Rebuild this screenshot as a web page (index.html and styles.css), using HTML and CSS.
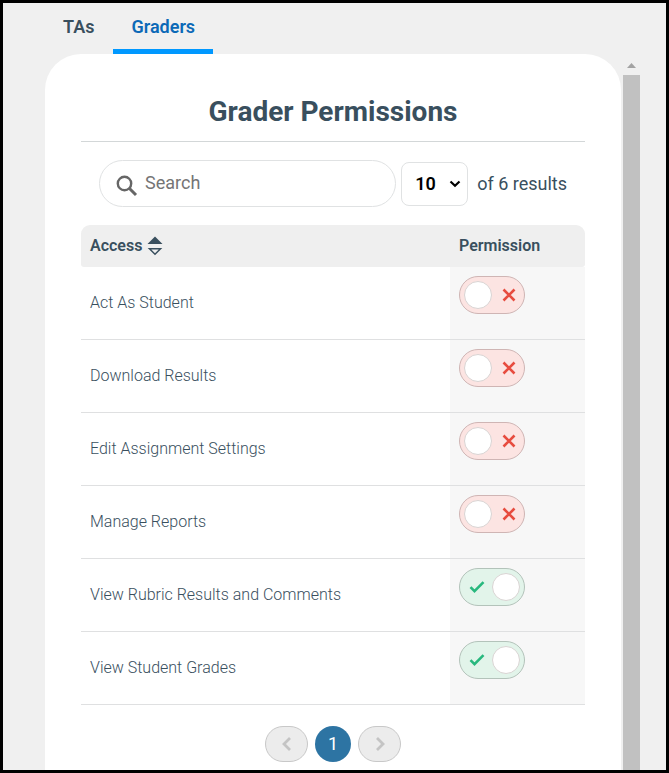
FILE: index.html
```html
<!DOCTYPE html>
<html lang="en">
<head>
<meta charset="utf-8">
<meta name="viewport" content="width=device-width, initial-scale=1">
<title>Grader Permissions</title>
<link rel="stylesheet" href="styles.css">
</head>
<body>
<svg class="sprite" aria-hidden="true">
  <symbol id="cross" viewBox="0 0 14 14"><path d="M1.500 1.500l11 11M12.500 1.500L1.500 12.500" fill="none" stroke="currentColor" stroke-width="2.600"/></symbol>
  <symbol id="check" viewBox="0 0 16 14"><path d="M1.500 7.200l4 4L14.500 2.200" fill="none" stroke="currentColor" stroke-width="2.600"/></symbol>
</svg>
<div class="app">
  <nav class="tabs">
    <a class="tab" href="#tas">TAs</a>
    <a class="tab tab-active" href="#graders" aria-current="page">Graders</a>
  </nav>
  <div class="viewport">
    <main class="card">
      <h1 class="title">Grader Permissions</h1>
      <div class="toolbar">
        <label class="search">
          <svg class="search-icon" viewBox="0 0 22 22" aria-hidden="true"><circle cx="8.500" cy="8.500" r="6.700" fill="none" stroke="currentColor" stroke-width="2.400"/><path d="M13.500 13.500l6.500 6.500" stroke="currentColor" stroke-width="3"/></svg>
          <input class="search-input" type="search" placeholder="Search" aria-label="Search">
        </label>
        <span class="page-size">
          <select aria-label="Results per page"><option>10</option><option>25</option></select>
          <svg viewBox="0 0 12 8" aria-hidden="true"><path d="M1.500 1.500L6 5.800l4.500-4.300" fill="none" stroke="currentColor" stroke-width="2.200"/></svg>
        </span>
        <span class="count">of 6 results</span>
      </div>
      <table class="permissions">
        <thead>
          <tr>
            <th scope="col"><button class="sort" type="button">Access
              <svg class="sort-icon" viewBox="0 0 16 20" aria-hidden="true"><path d="M0.500 8L8 0.500L15.500 8z" fill="currentColor"/><path d="M2.500 12.700h11L8 18.200z" fill="none" stroke="currentColor" stroke-width="1.500"/></svg></button></th>
            <th scope="col" class="permission">Permission</th>
          </tr>
        </thead>
        <tbody>
          <tr><td><label for="p1">Act As Student</label></td><td class="permission"><span class="toggle"><input type="checkbox" id="p1"><svg class="cross"><use href="#cross"/></svg><svg class="check"><use href="#check"/></svg></span></td></tr>
          <tr><td><label for="p2">Download Results</label></td><td class="permission"><span class="toggle"><input type="checkbox" id="p2"><svg class="cross"><use href="#cross"/></svg><svg class="check"><use href="#check"/></svg></span></td></tr>
          <tr><td><label for="p3">Edit Assignment Settings</label></td><td class="permission"><span class="toggle"><input type="checkbox" id="p3"><svg class="cross"><use href="#cross"/></svg><svg class="check"><use href="#check"/></svg></span></td></tr>
          <tr><td><label for="p4">Manage Reports</label></td><td class="permission"><span class="toggle"><input type="checkbox" id="p4"><svg class="cross"><use href="#cross"/></svg><svg class="check"><use href="#check"/></svg></span></td></tr>
          <tr><td><label for="p5">View Rubric Results and Comments</label></td><td class="permission"><span class="toggle"><input type="checkbox" id="p5" checked><svg class="cross"><use href="#cross"/></svg><svg class="check"><use href="#check"/></svg></span></td></tr>
          <tr><td><label for="p6">View Student Grades</label></td><td class="permission"><span class="toggle"><input type="checkbox" id="p6" checked><svg class="cross"><use href="#cross"/></svg><svg class="check"><use href="#check"/></svg></span></td></tr>
        </tbody>
      </table>
      <nav class="pager" aria-label="Pages">
        <button class="step" type="button" disabled aria-label="Previous page"><svg viewBox="0 0 10 14" aria-hidden="true"><path d="M8 1L2 7l6 6" fill="none" stroke="currentColor" stroke-width="2.800"/></svg></button>
        <button class="page" type="button" aria-current="page">1</button>
        <button class="step" type="button" disabled aria-label="Next page"><svg viewBox="0 0 10 14" aria-hidden="true"><path d="M2 1L8 7l-6 6" fill="none" stroke="currentColor" stroke-width="2.800"/></svg></button>
      </nav>
    </main>
    <div class="scrollbar" aria-hidden="true"><svg class="scroll-up" viewBox="0 0 9 5"><path d="M0 5L4.500 0L9 5z" fill="currentColor"/></svg><div class="thumb"></div></div>
  </div>
</div>
</body>
</html>
```
FILE: styles.css
```css
*, *::before { box-sizing: border-box; }

body {
  margin: 0;
  font: 16px/24px Roboto, "Liberation Sans", sans-serif;
  color: #394f5e;
}

button, input, select { font: inherit; color: inherit; }

.sprite { display: none; }

.app {
  display: flex;
  flex-direction: column;
  min-height: 100vh;
  padding: 0 26px 0 42px;
  border: 3px solid #000;
  background: #f0f0f0;
}

/* Tabs */
.tabs { display: flex; gap: 1px; }

.tab {
  padding: 12px 18px 10px;
  border-bottom: 5px solid transparent;
  font-size: 18px;
  font-weight: 600;
  color: inherit;
  text-decoration: none;
}

.tab-active { color: #0b69b7; border-color: #0098ff; }

.viewport { display: flex; flex: 1; gap: 2px; }

.card {
  flex: 1;
  padding: 36px 36px 8px;
  border-radius: 36px 36px 0 0;
  background: #fff;
}

.title {
  margin: 0;
  padding-bottom: 7px;
  border-bottom: 1px solid #d3d7d8;
  font-size: 28px;
  line-height: 44px;
  font-weight: 700;
  text-align: center;
}

/* Search and page size */
.toolbar {
  display: flex;
  align-items: center;
  padding: 18px;
  font-size: 18px;
}

.search {
  display: flex;
  flex: 1;
  align-items: center;
  gap: 7px;
  min-width: 0;
  height: 47px;
  padding: 0 16px;
  border: 1px solid #e0e2e3;
  border-radius: 24px;
  color: #666;
}

.search-icon { flex: none; width: 22px; height: 22px; margin-top: 4px; }

.search-input {
  flex: 1;
  min-width: 0;
  padding: 0 0 2px;
  border: 0;
  outline: 0;
  background: none;
}

.search-input::placeholder { color: #757575; }

.page-size {
  position: relative;
  width: 67px;
  height: 44px;
  margin: 0 9px 0 5px;
  color: #000;
}

.page-size select {
  width: 100%;
  height: 100%;
  padding: 0 13px;
  border: 1px solid #e0e2e3;
  border-radius: 8px;
  background: #fff;
  font-weight: 600;
  appearance: none;
}

.page-size svg {
  position: absolute;
  top: 18px;
  right: 7px;
  width: 12px;
  height: 8px;
  pointer-events: none;
}

/* Table */
.permissions { width: 100%; border-spacing: 0; }

th {
  height: 42px;
  padding: 0 9px;
  background: #efefef;
  font-weight: 600;
  text-align: left;
}

th:first-child { border-radius: 9px 0 0 3px; }
th:last-child { border-radius: 0 9px 3px 0; }

.sort {
  display: flex;
  align-items: center;
  gap: 5px;
  padding: 0;
  border: 0;
  background: none;
}

.sort-icon { width: 16px; height: 20px; }

td {
  height: 73px;
  padding: 0 9px;
  border-bottom: 1px solid #dfe0e1;
  font-weight: 300;
}

.permission { width: 135px; }

td.permission {
  padding-top: 9px;
  background: #f7f7f7;
  vertical-align: top;
}

/* Toggle */
.toggle {
  position: relative;
  display: block;
  width: 66px;
  height: 38px;
}

.toggle input {
  display: flex;
  align-items: center;
  width: 100%;
  height: 100%;
  margin: 0;
  padding: 0 4px;
  border: 1px solid #cfb5b4;
  border-radius: 19px;
  background: #fce4e2;
  appearance: none;
}

.toggle input::before {
  content: "";
  width: 28px;
  height: 28px;
  border: 1px solid #d9d4d3;
  border-radius: 50%;
  background: #fff;
}

.toggle input:checked {
  justify-content: flex-end;
  border-color: #b3c3ba;
  background: #e2f4ea;
}

.toggle svg {
  position: absolute;
  top: 12px;
  height: 14px;
  pointer-events: none;
}

.cross { right: 9px; width: 14px; color: #e74c3f; }
.check { left: 10px; width: 16px; color: #28b87e; }
.toggle input:checked ~ .cross,
.toggle input:not(:checked) ~ .check { display: none; }

/* Pager */
.pager {
  display: flex;
  justify-content: center;
  gap: 7px;
  padding-top: 21px;
}

.pager button {
  display: flex;
  align-items: center;
  justify-content: center;
  height: 36px;
  padding: 0;
  border-radius: 18px;
}

.step {
  width: 43px;
  border: 1px solid #c8c8c8;
  background: #ececec;
}

.step svg { width: 10px; height: 14px; color: #c4c4c4; }

.page {
  width: 36px;
  border: 0;
  background: #2d74a3;
  color: #fff;
  font-size: 18px;
}

/* Scroll indicator */
.scrollbar {
  display: flex;
  flex-direction: column;
  align-items: center;
  width: 17px;
  padding-top: 9px;
}

.scroll-up { width: 9px; height: 5px; color: #a3a3a3; }

.thumb {
  flex: 1;
  width: 100%;
  margin-top: 7px;
  background: #c1c1c1;
}
```
